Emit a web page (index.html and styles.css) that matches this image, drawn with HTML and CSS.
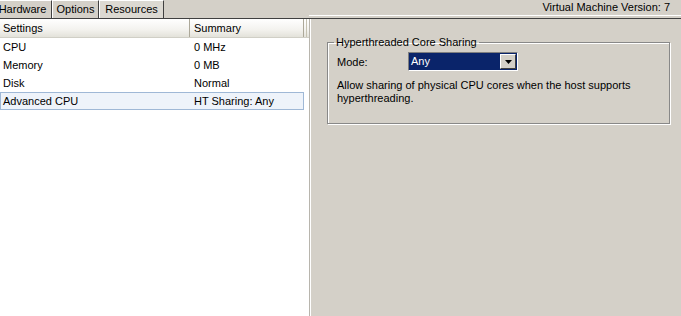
FILE: index.html
```html
<!DOCTYPE html>
<html>
<head>
<meta charset="utf-8">
<link rel="stylesheet" href="styles.css">
</head>
<body>
<div class="topbar">
  <div class="tabs">
    <div class="tab tab-hw">Hardware</div>
    <div class="tab tab-op">Options</div>
    <div class="tab tab-sel">Resources</div>
  </div>
  <div class="version">Virtual Machine Version: 7</div>
</div>
<div class="main">
  <div class="left">
    <div class="header">
      <div class="hcell hc1">Settings</div>
      <div class="hcell hc2">Summary</div>
      <div class="hcell hc3"></div>
    </div>
    <div class="row"><span class="c1">CPU</span><span class="c2">0 MHz</span></div>
    <div class="row"><span class="c1">Memory</span><span class="c2">0 MB</span></div>
    <div class="row"><span class="c1">Disk</span><span class="c2">Normal</span></div>
    <div class="row sel"><span class="c1">Advanced CPU</span><span class="c2">HT Sharing: Any</span></div>
  </div>
  <div class="sep"></div>
  <div class="right">
    <fieldset class="group">
      <legend>Hyperthreaded Core Sharing</legend>
      <div class="mode">
        <span class="mode-label">Mode:</span>
        <div class="combo">
          <span class="combo-val">Any</span>
          <span class="combo-btn"><svg width="7" height="4" viewBox="0 0 7 4"><path d="M0 0H7L3.5 4Z" fill="#000"/></svg></span>
        </div>
      </div>
      <p class="desc">Allow sharing of physical CPU cores when the host supports hyperthreading.</p>
    </fieldset>
  </div>
</div>
</body>
</html>
```
FILE: styles.css
```css
html, body {
  margin: 0;
  padding: 0;
}
body {
  width: 681px;
  height: 316px;
  overflow: hidden;
  background: #d4d0c8;
  font-family: "Liberation Sans", Arial, sans-serif;
  font-size: 11px;
  color: #000;
}
.topbar {
  height: 18px;
  display: flex;
  justify-content: space-between;
  border-bottom: 1px solid #404040;
}
.tabs {
  display: flex;
  height: 18px;
}
.tab {
  height: 18px;
  line-height: 16px;
  box-sizing: border-box;
  text-align: center;
  white-space: nowrap;
  border-left: 1px solid #fff;
  border-right: 1px solid #404040;
  border-top: 1px solid #fff;
  flex: none;
}
.tab-hw {
  margin-left: -4px;
  width: 56px;
  padding-right: 3px;
}
.tab-op {
  width: 47px;
}
.tab-sel {
  width: 65px;
  background: #dcd9d2;
}
.version {
  padding-right: 11px;
  line-height: 15px;
  border-bottom: 1px solid #fff;
  height: 16px;
  box-sizing: border-box;
  width: 372px;
  text-align: right;
}
.main {
  display: flex;
  height: 297px;
}
.left {
  width: 309px;
  background: #fff;
  flex: none;
}
.header {
  display: flex;
  height: 18px;
  border-bottom: 1px solid #d0cfc6;
  background: linear-gradient(#ffffff, #f3f2ee 60%, #e3e2da);
}
.hcell {
  line-height: 18px;
  box-sizing: border-box;
  border-right: 1px solid #aca899;
}
.hc1 {
  width: 190px;
  padding-left: 3px;
}
.hc2 {
  width: 114px;
  padding-left: 4px;
}
.hc3 {
  width: 3px;
  border-right: 1px solid #c5c2b2;
}
.row {
  display: flex;
  height: 18px;
  line-height: 17px;
  padding-top: 1px;
  box-sizing: border-box;
  width: 304px;
}
.c1 {
  width: 191px;
  padding-left: 3px;
  box-sizing: border-box;
}
.c2 {
  padding-left: 3px;
}
.row.sel {
  background: #eef3fa;
  border: 1px solid #9fb8d6;
  line-height: 16px;
  padding-top: 0;
}
.row.sel .c1 {
  padding-left: 2px;
  width: 190px;
}
.sep {
  width: 1px;
  background: #b8b5ad;
  border-right: 1px solid #fff;
  flex: none;
}
.right {
  flex: 1;
  padding: 17px 11px 0 16px;
}
.group {
  margin: 0;
  padding: 0 9px 0 9px;
  height: 88px;
  box-sizing: border-box;
  border: 1px solid #888;
  box-shadow: 1px 1px 0 #fff, inset 1px 1px 0 #fff;
}
.group legend {
  padding: 0 2px;
  margin-left: -3px;
  line-height: 13px;
}
.mode {
  display: flex;
  align-items: center;
  height: 19px;
  margin-top: 3px;
}
.mode-label {
  width: 71px;
}
.combo {
  width: 110px;
  height: 19px;
  box-sizing: border-box;
  border: 1px solid #7f7f7f;
  border-right-color: #fff;
  border-bottom-color: #fff;
  background: #0a246a;
  display: flex;
  padding: 1px;
}
.combo-val {
  flex: 1;
  color: #fff;
  line-height: 15px;
  padding-left: 1px;
}
.combo-btn {
  width: 16px;
  background: #d4d0c8;
  box-sizing: border-box;
  border: 1px solid #fff;
  border-right-color: #404040;
  border-bottom-color: #404040;
  display: flex;
  align-items: center;
  justify-content: center;
}
.desc {
  margin: 8px 0 0 0;
  line-height: 13px;
  width: 320px;
}
```
